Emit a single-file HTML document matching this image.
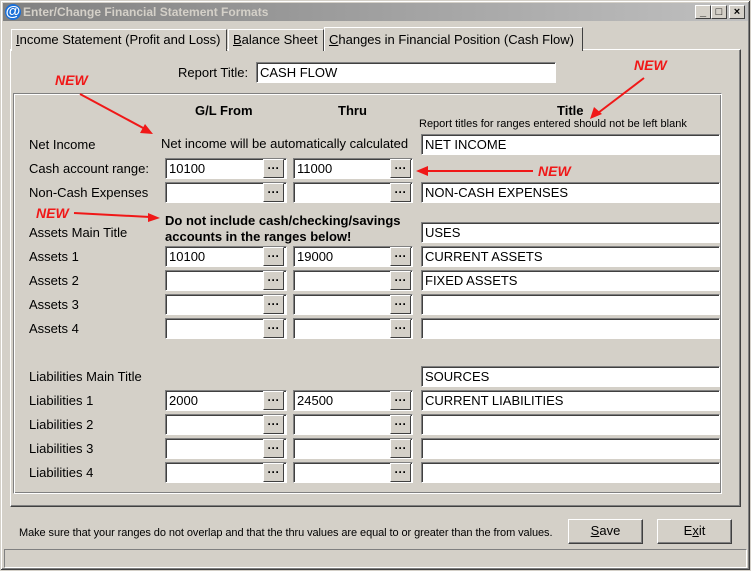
<!DOCTYPE html>
<html><head><meta charset="utf-8"><style>
*{box-sizing:border-box;margin:0;padding:0}
body{width:751px;height:571px;background:#d4d0c8;font-family:"Liberation Sans",sans-serif;font-size:12px;color:#000;position:relative;overflow:hidden}
.a{position:absolute}
.win{left:0;top:0;width:751px;height:571px;border:1px solid #d4d0c8;box-shadow:inset -1px -1px #404040,inset 1px 1px #fff,inset -2px -2px #808080}
.tb{left:3px;top:3px;width:745px;height:18px;background:linear-gradient(90deg,#808080,#c0c0c0);color:#d4d0c8;font-weight:bold;font-size:12px;line-height:18px;padding-left:20px}
.tbtn{top:5px;width:16px;height:14px;background:#d4d0c8;border:1px solid;border-color:#fff #404040 #404040 #fff;font-size:11px;line-height:12px;text-align:center;font-weight:bold}
.tab{height:22px;border:1px solid;border-color:#fff #404040 transparent #fff;border-bottom:none;padding:0 4px;font-size:13px;line-height:20px;background:#d4d0c8}
.page{left:10px;top:49px;width:731px;height:458px;border:1px solid;border-color:#fff #404040 #404040 #fff;box-shadow:inset -1px -1px #808080}
.grp{left:13px;top:93px;width:709px;height:401px;border:1px solid;border-color:#808080 #fff #fff #808080;box-shadow:inset 1px 1px #fff,inset -1px -1px #808080}
.in{background:#fff;height:21px;border:1px solid;border-color:#808080 #fff #fff #808080;box-shadow:inset 1px 1px #404040;font-size:13px;line-height:19px;padding-left:3px}
.bt{width:21px;height:19px;background:#d4d0c8;border:1px solid;border-color:#fff #404040 #404040 #fff;font-weight:bold;font-size:12px;line-height:17px;text-align:center;letter-spacing:0px}
.lb{left:29px;font-size:13px}
.new{color:#f01818;font-weight:bold;font-style:italic;font-size:14px}
.btn{width:75px;height:25px;border:1px solid;border-color:#fff #404040 #404040 #fff;box-shadow:inset -1px -1px #808080;text-align:center;line-height:22px;font-size:13px}
</style></head><body>
<div class="a win"></div>
<div class="a tb">Enter/Change Financial Statement Formats</div>
<div class="a" style="left:5px;top:4px;width:16px;height:16px;border-radius:50%;background:#1a6fd8;color:#fff;font-weight:bold;font-size:15px;line-height:15px;text-align:center">@</div>
<div class="a tbtn" style="left:695px">_</div>
<div class="a tbtn" style="left:711px">□</div>
<div class="a tbtn" style="left:729px">×</div>
<div class="a page"></div>
<div class="a tab" style="left:11px;top:29px;width:216px"><u>I</u>ncome Statement (Profit and Loss)</div>
<div class="a tab" style="left:228px;top:29px;width:96px"><u>B</u>alance Sheet</div>
<div class="a tab" style="left:324px;top:27px;width:259px;height:24px;line-height:23px"><u>C</u>hanges in Financial Position (Cash Flow)</div>
<div class="a" style="left:178px;top:65px;font-size:13px">Report Title:</div>
<div class="a in" style="left:256px;top:62px;width:300px">CASH FLOW</div>
<div class="a grp"></div>
<div class="a" style="left:195px;top:103px;font-weight:bold;font-size:13px">G/L From</div>
<div class="a" style="left:338px;top:103px;font-weight:bold;font-size:13px">Thru</div>
<div class="a" style="left:557px;top:103px;font-weight:bold;font-size:13px">Title</div>
<div class="a" style="left:419px;top:118px;font-size:11px">Report titles for ranges entered should not be left blank</div>
<div class="a" style="left:161px;top:136px;font-size:13px">Net income will be automatically calculated</div>
<div class="a" style="left:165px;top:213px;font-weight:bold;font-size:13px;line-height:16px">Do not include cash/checking/savings<br>accounts in the ranges below!</div>
<div class="a new" style="left:55px;top:72px">NEW</div>
<div class="a new" style="left:634px;top:57px">NEW</div>
<div class="a new" style="left:538px;top:163px">NEW</div>
<div class="a new" style="left:36px;top:205px">NEW</div>
<svg class="a" style="left:0;top:0" width="751" height="571">
<g stroke="#f01818" stroke-width="2" fill="#f01818">
<line x1="80" y1="94" x2="145" y2="129"/><polygon points="153,134 140,133 145,124" stroke="none"/>
<line x1="644" y1="78" x2="598" y2="113"/><polygon points="590,119 594,107 602,114" stroke="none"/>
<line x1="533" y1="171" x2="426" y2="171"/><polygon points="416,171 428,166 428,176" stroke="none"/>
<line x1="74" y1="213" x2="150" y2="217"/><polygon points="160,218 148,213 148,222" stroke="none"/>
</g></svg>
<div class="a lb" style="top:137px">Net Income</div>
<div class="a lb" style="top:161px">Cash account range:</div>
<div class="a lb" style="top:185px">Non-Cash Expenses</div>
<div class="a lb" style="top:225px">Assets Main Title</div>
<div class="a lb" style="top:249px">Assets 1</div>
<div class="a lb" style="top:273px">Assets 2</div>
<div class="a lb" style="top:297px">Assets 3</div>
<div class="a lb" style="top:321px">Assets 4</div>
<div class="a lb" style="top:369px">Liabilities Main Title</div>
<div class="a lb" style="top:393px">Liabilities 1</div>
<div class="a lb" style="top:417px">Liabilities 2</div>
<div class="a lb" style="top:441px">Liabilities 3</div>
<div class="a lb" style="top:465px">Liabilities 4</div>

<div class="a in" style="left:421px;top:134px;width:299px">NET INCOME</div>
<div class="a in" style="left:421px;top:182px;width:299px">NON-CASH EXPENSES</div>
<div class="a in" style="left:421px;top:222px;width:299px">USES</div>
<div class="a in" style="left:421px;top:246px;width:299px">CURRENT ASSETS</div>
<div class="a in" style="left:421px;top:270px;width:299px">FIXED ASSETS</div>
<div class="a in" style="left:421px;top:294px;width:299px"></div>
<div class="a in" style="left:421px;top:318px;width:299px"></div>
<div class="a in" style="left:421px;top:366px;width:299px">SOURCES</div>
<div class="a in" style="left:421px;top:390px;width:299px">CURRENT LIABILITIES</div>
<div class="a in" style="left:421px;top:414px;width:299px"></div>
<div class="a in" style="left:421px;top:438px;width:299px"></div>
<div class="a in" style="left:421px;top:462px;width:299px"></div>

<div class="a in" style="left:165px;top:158px;width:122px">10100</div><div class="a bt" style="left:263px;top:159px">···</div>
<div class="a in" style="left:293px;top:158px;width:120px">11000</div><div class="a bt" style="left:390px;top:159px">···</div>
<div class="a in" style="left:165px;top:182px;width:122px"></div><div class="a bt" style="left:263px;top:183px">···</div>
<div class="a in" style="left:293px;top:182px;width:120px"></div><div class="a bt" style="left:390px;top:183px">···</div>
<div class="a in" style="left:165px;top:246px;width:122px">10100</div><div class="a bt" style="left:263px;top:247px">···</div>
<div class="a in" style="left:293px;top:246px;width:120px">19000</div><div class="a bt" style="left:390px;top:247px">···</div>
<div class="a in" style="left:165px;top:270px;width:122px"></div><div class="a bt" style="left:263px;top:271px">···</div>
<div class="a in" style="left:293px;top:270px;width:120px"></div><div class="a bt" style="left:390px;top:271px">···</div>
<div class="a in" style="left:165px;top:294px;width:122px"></div><div class="a bt" style="left:263px;top:295px">···</div>
<div class="a in" style="left:293px;top:294px;width:120px"></div><div class="a bt" style="left:390px;top:295px">···</div>
<div class="a in" style="left:165px;top:318px;width:122px"></div><div class="a bt" style="left:263px;top:319px">···</div>
<div class="a in" style="left:293px;top:318px;width:120px"></div><div class="a bt" style="left:390px;top:319px">···</div>
<div class="a in" style="left:165px;top:390px;width:122px">2000</div><div class="a bt" style="left:263px;top:391px">···</div>
<div class="a in" style="left:293px;top:390px;width:120px">24500</div><div class="a bt" style="left:390px;top:391px">···</div>
<div class="a in" style="left:165px;top:414px;width:122px"></div><div class="a bt" style="left:263px;top:415px">···</div>
<div class="a in" style="left:293px;top:414px;width:120px"></div><div class="a bt" style="left:390px;top:415px">···</div>
<div class="a in" style="left:165px;top:438px;width:122px"></div><div class="a bt" style="left:263px;top:439px">···</div>
<div class="a in" style="left:293px;top:438px;width:120px"></div><div class="a bt" style="left:390px;top:439px">···</div>
<div class="a in" style="left:165px;top:462px;width:122px"></div><div class="a bt" style="left:263px;top:463px">···</div>
<div class="a in" style="left:293px;top:462px;width:120px"></div><div class="a bt" style="left:390px;top:463px">···</div>

<div class="a" style="left:19px;top:527px;font-size:11px;letter-spacing:-0.08px">Make sure that your ranges do not overlap and that the thru values are equal to or greater than the from values.</div>
<div class="a btn" style="left:568px;top:519px"><u>S</u>ave</div>
<div class="a btn" style="left:657px;top:519px">E<u>x</u>it</div>
<div class="a" style="left:4px;top:549px;width:743px;height:19px;border:1px solid;border-color:#808080 #fff #fff #808080"></div>
</body></html>
